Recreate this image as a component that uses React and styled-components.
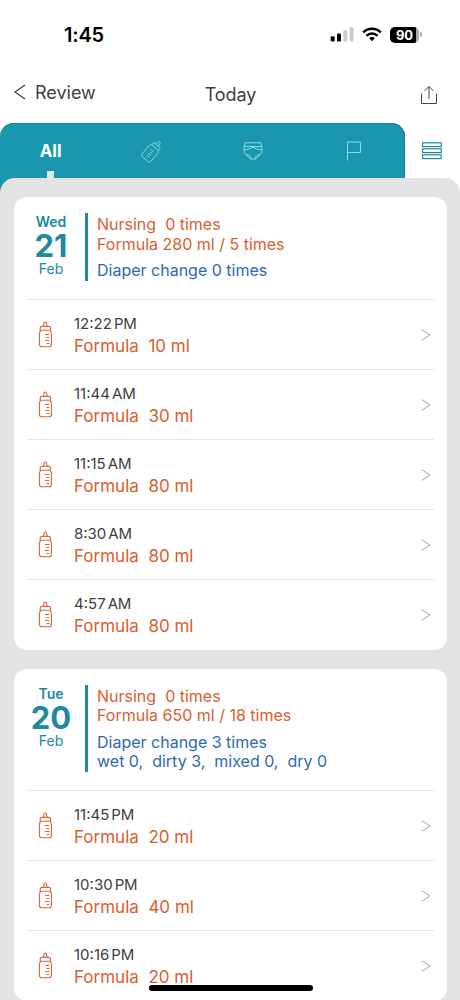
import React from "react";
import styled, { createGlobalStyle } from "styled-components";

const days = [
	{
		weekday: "Wed",
		day: "21",
		month: "Feb",
		feeding: ["Nursing  0 times", "Formula 280 ml / 5 times"],
		diapers: ["Diaper change 0 times"],
		entries: [
			{ time: "12:22", period: "PM", amount: 10 },
			{ time: "11:44", period: "AM", amount: 30 },
			{ time: "11:15", period: "AM", amount: 80 },
			{ time: "8:30", period: "AM", amount: 80 },
			{ time: "4:57", period: "AM", amount: 80 }
		]
	},
	{
		weekday: "Tue",
		day: "20",
		month: "Feb",
		feeding: ["Nursing  0 times", "Formula 650 ml / 18 times"],
		diapers: ["Diaper change 3 times", "wet 0,  dirty 3,  mixed 0,  dry 0"],
		entries: [
			{ time: "11:45", period: "PM", amount: 20 },
			{ time: "10:30", period: "PM", amount: 40 },
			{ time: "10:16", period: "PM", amount: 20 }
		]
	}
];

const SignalIcon = () => (
	<svg width="24" height="16" viewBox="0 0 24 16">
		<rect x="0.7" y="9.2" width="4" height="5.3" rx="1.2" fill="#000" />
		<rect x="7" y="6.4" width="4" height="8.1" rx="1.2" fill="#000" />
		<rect x="13.3" y="3.2" width="4" height="11.3" rx="1.2" fill="#ccc" />
		<rect x="19.6" y="0.2" width="4" height="14.3" rx="1.2" fill="#ccc" />
	</svg>
);

const WifiIcon = () => (
	<svg width="20" height="16" viewBox="0 0 20 16" fill="none" stroke="#000">
		<path d="M1.2 5.3C6.2.4 13.8.4 18.8 5.3" strokeWidth="2.5" />
		<path d="M4.4 8.8C7.6 5.7 12.4 5.7 15.6 8.8" strokeWidth="2.4" />
		<path d="M7 11.1C8.8 9.6 11.2 9.6 13 11.1L10 14.2Z" fill="#000" stroke="none" />
	</svg>
);

const BackIcon = () => (
	<svg width="12" height="16" viewBox="0 0 12 16" fill="none" stroke="#333" strokeWidth="1.1">
		<path d="M11 1L.9 8L11 15" />
	</svg>
);

const ShareIcon = () => (
	<svg width="18" height="20" viewBox="0 0 18 20" fill="none" stroke="#444" strokeWidth="1">
		<path d="M1.5 8.5V18.5H16.5V8.5M9 14V1.5M4.5 6L9 1.5L13.5 6" />
	</svg>
);

const BottleIcon = () => (
	<svg width="15" height="27" viewBox="0 0 15 27" fill="none" stroke="currentColor" strokeWidth="1.1">
		<path d="M5.2 5.3C5.2 4.3 6 4.2 6 3.2V2.3C6 .5 8.6.5 8.6 2.3V3.2C8.6 4.2 9.4 4.3 9.4 5.3" />
		<path d="M2.2 9.2V7.4C2.2 6 3 5.4 4.3 5.4H10.5C11.8 5.4 12.6 6 12.6 7.4V9.2Z" />
		<path d="M2.9 9.3C1.9 10.2 1.4 10.8 1.4 12V23.2C1.4 25 2.2 25.8 4 25.8H10.8C12.6 25.8 13.4 25 13.4 23.2V12C13.4 10.8 12.9 10.2 11.9 9.3" />
		<path d="M7 13.5H11.3M8.5 16.5H11.3M7 19.5H11.3M8.5 22.5H11.3" />
	</svg>
);

const TabBottleIcon = () => (
	<svg width="24" height="24" viewBox="0 0 24 24" fill="none" stroke="currentColor" strokeWidth="0.95">
		<g transform="translate(12 12.2) rotate(41) scale(0.96) translate(-7.4 -13.5)">
			<path d="M5.2 5.3C5.2 4.3 6 4.2 6 3.2V2.3C6 .5 8.6.5 8.6 2.3V3.2C8.6 4.2 9.4 4.3 9.4 5.3" />
			<path d="M2.7 8.6V7.2C2.7 6 3.2 5.3 4.5 5.3H10.3C11.6 5.3 12.1 6 12.1 7.2V8.6" />
			<path d="M3 8.6C2 9.4 1.4 10 1.4 11.2V21.8C1.4 23.6 2.2 24.4 4 24.4H10.8C12.6 24.4 13.4 23.6 13.4 21.8V11.2C13.4 10 12.8 9.4 11.8 8.6Z" />
			<path d="M5.4 13H9.4M6.6 15.4H9.4M5.4 17.8H9.4M6.6 20.2H9.4" />
		</g>
	</svg>
);

const DiaperIcon = () => (
	<svg width="20" height="18" viewBox="0 0 20 18" fill="none" stroke="currentColor" strokeWidth="1">
		<path d="M2.2.8H17.8L19 5.4C19.4 8.4 18.9 10.8 17.6 12L13.4 16.3Q12.8 17 12 17H8Q7.2 17 6.6 16.3L2.4 12C1.1 10.8.6 8.4 1 5.4Z" />
		<path d="M1.4 4.5H18.6M10 4.5V6M10 5.2C7.6 6.6 5 7.7 1 8M10 5.2C12.4 6.6 15 7.7 19 8M3.2 12.6C5.6 12.6 7.6 14.2 7.8 16.8M16.8 12.6C14.4 12.6 12.4 14.2 12.2 16.8" />
	</svg>
);

const FlagIcon = () => (
	<svg width="16" height="20" viewBox="0 0 16 20" fill="none" stroke="currentColor" strokeWidth="1">
		<path d="M1.5 19.5V1H14.5V11.5H1.5" />
	</svg>
);

const ListIcon = () => (
	<svg width="20" height="18" viewBox="0 0 20 18" fill="none" stroke="#2189a1" strokeWidth="1.2">
		<rect x="0.6" y="0.8" width="18.6" height="3.8" />
		<rect x="0.6" y="6.8" width="18.6" height="3.8" />
		<rect x="0.6" y="12.8" width="18.6" height="3.8" />
	</svg>
);

const ChevronIcon = () => (
	<svg width="10" height="12" viewBox="0 0 10 12" fill="none" stroke="#999" strokeWidth="0.9">
		<path d="M.8.6L9 6L.8 11.4" />
	</svg>
);

const Entry = ({ time, period, amount }) => (
	<Row>
		<RowIcon>
			<BottleIcon />
		</RowIcon>
		<RowText>
			<Time>
				{time}
				<Period>{period}</Period>
			</Time>
			<Amount>{`Formula  ${amount} ml`}</Amount>
		</RowText>
		<ChevronIcon />
	</Row>
);

const DayCard = ({ weekday, day, month, feeding, diapers, entries }) => (
	<Card>
		<CardHeader>
			<DateBlock>
				<Weekday>{weekday}</Weekday>
				<DayNumber>{day}</DayNumber>
				<Month>{month}</Month>
			</DateBlock>
			<Summary>
				<div>
					{feeding.map(line => (
						<SummaryLine key={line} color="#d9602f">
							{line}
						</SummaryLine>
					))}
				</div>
				<div>
					{diapers.map(line => (
						<SummaryLine key={line} color="#2f69ad">
							{line}
						</SummaryLine>
					))}
				</div>
			</Summary>
		</CardHeader>
		{entries.map(entry => (
			<Entry key={entry.time} {...entry} />
		))}
	</Card>
);

const App = () => (
	<Screen>
		<GlobalStyle />
		<StatusBar>
			<Clock>1:45</Clock>
			<StatusIcons>
				<SignalIcon />
				<WifiIcon />
				<Battery>
					<BatteryLevel>90</BatteryLevel>
					<BatteryTip />
				</Battery>
			</StatusIcons>
		</StatusBar>
		<NavBar>
			<BackLink>
				<BackIcon />
				Review
			</BackLink>
			<Title>Today</Title>
			<ShareButton>
				<ShareIcon />
			</ShareButton>
		</NavBar>
		<TabBar>
			<Tabs>
				<Tab $active>All</Tab>
				<Tab>
					<TabBottleIcon />
				</Tab>
				<Tab>
					<DiaperIcon />
				</Tab>
				<Tab>
					<FlagIcon />
				</Tab>
			</Tabs>
			<ListButton>
				<ListIcon />
			</ListButton>
		</TabBar>
		<PanelBack>
			<Panel>
				{days.map(day => (
					<DayCard key={day.day} {...day} />
				))}
			</Panel>
		</PanelBack>
		<HomeIndicator />
	</Screen>
);

const GlobalStyle = createGlobalStyle`
	body {
		margin: 0;
		background: #fff;
	}
	* {
		box-sizing: border-box;
	}
	svg {
		display: block;
		flex: none;
	}
`;

const Screen = styled.div`
	position: relative;
	display: flex;
	flex-direction: column;
	width: 460px;
	height: 1000px;
	overflow: hidden;
	background: #fff;
	color: #404040;
	font-family: Inter, "Liberation Sans", sans-serif;
`;

const StatusBar = styled.header`
	display: flex;
	align-items: center;
	justify-content: space-between;
	height: 69px;
	padding: 0 37px 0 64px;
`;

const Clock = styled.div`
	font-size: 20px;
	font-weight: 600;
	letter-spacing: -0.2px;
	color: #000;
`;

const StatusIcons = styled.div`
	display: flex;
	align-items: center;
	gap: 8px;
	padding-right: 1px;
`;

const Battery = styled.div`
	display: flex;
	align-items: center;
	gap: 1px;
`;

const BatteryLevel = styled.div`
	width: 29px;
	height: 16px;
	border-radius: 5px;
	background: linear-gradient(to right, #000 26px, #aaa 26px);
	color: #fff;
	font-size: 13px;
	font-weight: 700;
	line-height: 16px;
	text-align: center;
`;

const BatteryTip = styled.div`
	width: 2px;
	height: 5px;
	border-radius: 0 2px 2px 0;
	background: #aaa;
`;

const NavBar = styled.nav`
	display: grid;
	grid-template-columns: 1fr auto 1fr;
	align-items: center;
	height: 54px;
	padding: 0 22px 0 14px;
	font-size: 18px;
`;

const BackLink = styled.a`
	display: flex;
	align-items: center;
	gap: 9px;
	padding-bottom: 8px;
`;

const Title = styled.h1`
	margin: 0;
	padding: 0 0 4px 9px;
	font-size: 18px;
	font-weight: 400;
	letter-spacing: -0.1px;
`;

const ShareButton = styled.div`
	justify-self: end;
	padding-bottom: 3px;
`;

const TabBar = styled.div`
	display: flex;
	height: 55px;
`;

const Tabs = styled.div`
	display: flex;
	width: 405px;
	border-radius: 14px 14px 0 0;
	background: #1b96af;
	box-shadow: inset 0 1px 0 #168097, inset -1px 0 0 #168097;
`;

const Tab = styled.div`
	position: relative;
	display: flex;
	flex: 1;
	align-items: center;
	justify-content: center;
	color: ${({ $active }) => ($active ? "#fff" : "#8ed9e8")};
	font-size: 17px;
	font-weight: 700;

	&::after {
		content: "";
		display: ${({ $active }) => ($active ? "block" : "none")};
		position: absolute;
		bottom: -1px;
		left: 47px;
		width: 7px;
		height: 8px;
		background: #e4e4e4;
	}
`;

const ListButton = styled.div`
	display: flex;
	flex: 1;
	align-items: center;
	justify-content: center;
	padding-right: 1px;
`;

const PanelBack = styled.div`
	flex: 1;
	min-height: 0;
	background: linear-gradient(to right, #1b96af 50%, #fff 50%);
`;

const Panel = styled.main`
	display: flex;
	flex-direction: column;
	gap: 19px;
	height: 100%;
	padding: 19px 13px 0 14px;
	border-radius: 15px 15px 0 0;
	background: #e4e4e4;
`;

const Card = styled.section`
	flex: none;
	padding: 0 13px 1px;
	border-radius: 13px;
	background: #fff;
`;

const CardHeader = styled.div`
	display: flex;
	align-items: flex-start;
	padding: 16px 0 18px;
`;

const DateBlock = styled.div`
	display: flex;
	flex-direction: column;
	align-items: center;
	width: 48px;
	margin-right: 10px;
	color: #2089a0;
`;

const Weekday = styled.div`
	font-size: 14px;
	font-weight: 600;
	line-height: 18px;
`;

const DayNumber = styled.div`
	font-size: 31px;
	font-weight: 700;
	line-height: 30px;
`;

const Month = styled.div`
	font-size: 14px;
	line-height: 16px;
`;

const Summary = styled.div`
	display: flex;
	flex-direction: column;
	gap: 7px;
	padding: 2px 0 0 9px;
	border-left: 3px solid #2089a0;
`;

const SummaryLine = styled.div`
	color: ${({ color }) => color};
	font-size: 16px;
	line-height: 19.5px;
	white-space: pre;
`;

const Row = styled.div`
	display: flex;
	align-items: center;
	height: 70px;
	padding: 1px 3px 0 0;
	border-top: 1px solid #e6e6e6;
`;

const RowIcon = styled.div`
	width: 47px;
	padding-left: 11px;
	color: #d8673c;
`;

const RowText = styled.div`
	flex: 1;
	padding-top: 1px;
`;

const Time = styled.div`
	display: flex;
	gap: 2px;
	font-size: 15px;
	line-height: 21px;
`;

const Period = styled.span`
	letter-spacing: -0.1px;
`;

const Amount = styled.div`
	color: #d9602f;
	font-size: 17px;
	line-height: 24px;
	white-space: pre;
`;

const HomeIndicator = styled.div`
	position: absolute;
	bottom: 9px;
	left: 149px;
	width: 164px;
	height: 6px;
	border-radius: 3px;
	background: #000;
`;

export default App;
